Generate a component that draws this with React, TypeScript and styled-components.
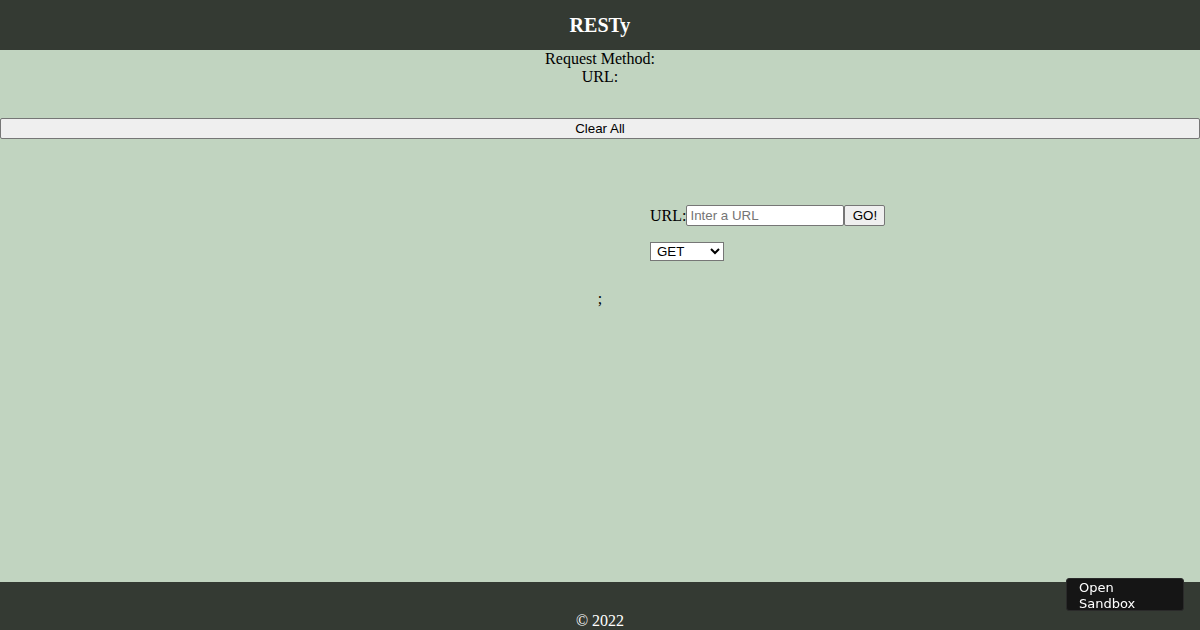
import styled, { createGlobalStyle } from "styled-components";

const GlobalStyle = createGlobalStyle`
  body {
    margin: 0;
    background: #c1d4c0;
    font-family: "Liberation Serif", "Times New Roman", serif;
    font-size: 16px;
    color: #000;
  }
`;

const Page = styled.div`
  display: flex;
  flex-direction: column;
  min-height: 630px;
`;

const Header = styled.header`
  height: 50px;
  background: #343a33;
  display: flex;
  align-items: center;
  justify-content: center;
`;

const Title = styled.h1`
  margin: 0;
  color: #fff;
  font-size: 20px;
  font-weight: bold;
`;

const Main = styled.main`
  flex: 1;
  display: flex;
  flex-direction: column;
`;

const Summary = styled.div`
  text-align: center;
  line-height: 18px;
`;

const Line = styled.div`
  height: 18px;
`;

const ClearButton = styled.button`
  display: block;
  width: 100%;
  height: 21px;
  margin: 32px 0 0;
  padding: 0;
  background: #efefef;
  border: 1px solid #767676;
  border-radius: 2px;
  font-family: "Liberation Sans", Arial, sans-serif;
  font-size: 13.33px;
  color: #000;
`;

const FormArea = styled.form`
  display: grid;
  grid-template-columns: 1fr 1fr;
  margin-top: 66px;
`;

const Controls = styled.div`
  grid-column: 2;
  padding-left: 50px;
  display: flex;
  flex-direction: column;
  gap: 16px;
`;

const UrlRow = styled.label`
  display: flex;
  align-items: center;
  height: 21px;
  line-height: 18px;
`;

const UrlInput = styled.input`
  box-sizing: border-box;
  width: 158px;
  height: 21px;
  padding: 1px 3px;
  border: 1px solid #767676;
  border-radius: 2px;
  background: #fff;
  font-family: "Liberation Sans", Arial, sans-serif;
  font-size: 13.33px;
  &::placeholder {
    color: #757575;
  }
`;

const GoButton = styled.button`
  box-sizing: border-box;
  width: 41px;
  height: 21px;
  padding: 0;
  background: #efefef;
  border: 1px solid #767676;
  border-radius: 2px;
  font-family: "Liberation Sans", Arial, sans-serif;
  font-size: 13.33px;
  color: #000;
`;

const MethodSelect = styled.select`
  box-sizing: border-box;
  width: 74px;
  height: 19px;
  border: 1px solid #767676;
  border-radius: 0;
  background: #fff;
  font-family: "Liberation Sans", Arial, sans-serif;
  font-size: 13.33px;
  padding: 0 2px;
`;

const Semi = styled.div`
  text-align: center;
  margin-top: 29px;
  line-height: 18px;
`;

const Footer = styled.footer`
  background: #343a33;
  color: #fff;
  text-align: center;
  height: 48px;
  box-sizing: border-box;
  padding-top: 30px;
  line-height: 18px;
`;

const SandboxBadge = styled.a`
  position: fixed;
  right: 16px;
  bottom: 19px;
  width: 118px;
  height: 33px;
  box-sizing: border-box;
  padding: 1px 12px;
  background: #151515;
  border: 1px solid #2a2a2a;
  border-radius: 3px;
  color: #fff;
  font-family: "DejaVu Sans", sans-serif;
  font-size: 13px;
  line-height: 16px;
  text-decoration: none;
`;

export default function App() {
  return (
    <>
      <GlobalStyle />
      <Page>
        <Header>
          <Title>RESTy</Title>
        </Header>
        <Main>
          <Summary>
            <Line>Request Method:</Line>
            <Line>URL:</Line>
          </Summary>
          <ClearButton type="button">Clear All</ClearButton>
          <FormArea onSubmit={(e) => e.preventDefault()}>
            <Controls>
              <UrlRow>
                URL:
                <UrlInput placeholder="Inter a URL" />
                <GoButton type="submit">GO!</GoButton>
              </UrlRow>
              <MethodSelect defaultValue="GET">
                <option>GET</option>
                <option>POST</option>
                <option>PUT</option>
                <option>DELETE</option>
              </MethodSelect>
            </Controls>
          </FormArea>
          <Semi>;</Semi>
        </Main>
        <Footer>© 2022</Footer>
      </Page>
      <SandboxBadge href="#">
        Open
        <br />
        Sandbox
      </SandboxBadge>
    </>
  );
}
